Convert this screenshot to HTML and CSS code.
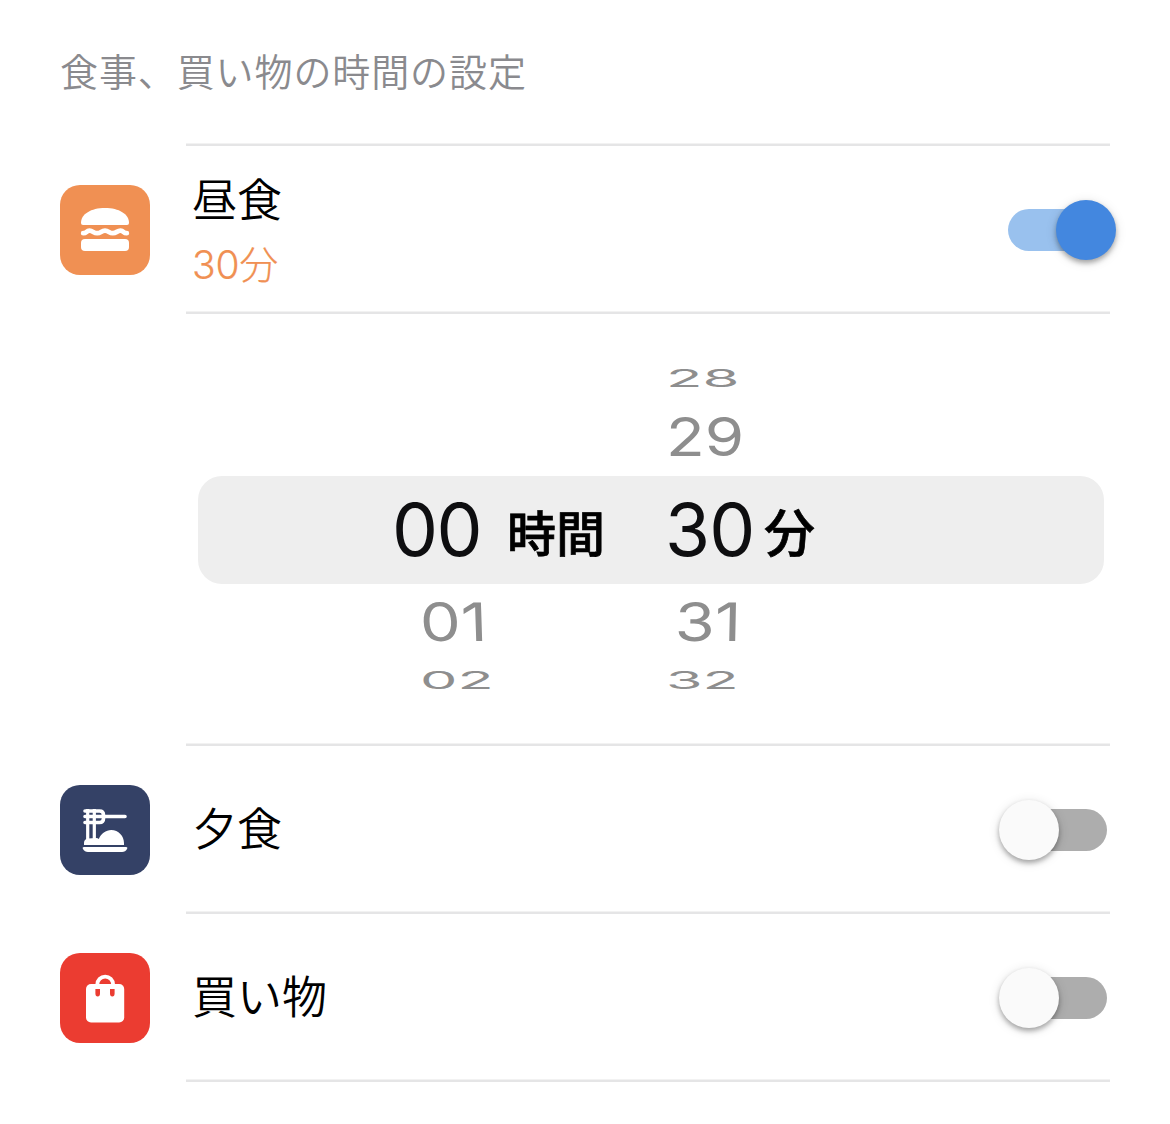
FILE: index.html
```html
<!DOCTYPE html>
<html lang="ja">
<head>
<meta charset="utf-8">
<title>食事、買い物の時間の設定</title>
<link rel="stylesheet" href="styles.css">
</head>
<body>
<main class="settings">
  <h1 class="heading">食事、買い物の時間の設定</h1>

  <section class="row">
    <div class="tile tile-lunch">
      <svg viewBox="0 0 90 90" width="90" height="90" fill="#fff">
        <path d="M23 40Q21 40 21 38C21 29 31 23 45 23S69 29 69 38Q69 40 67 40Z"/>
        <path d="M23.200 48.200C27 48.200 26 45.700 29.500 45.700S33.500 48.200 37.200 48.200S41.200 45.700 45 45.700S49 48.200 52.800 48.200S57 45.700 60.500 45.700S63 48.200 66.800 48.200" fill="none" stroke="#fff" stroke-width="4.800" stroke-linecap="round"/>
        <rect x="21" y="54" width="48" height="12" rx="4"/>
      </svg>
    </div>
    <div class="body body-first">
      <div class="labels"><span class="name">昼食</span><span class="duration">30分</span></div>
      <div class="switch on"><span class="knob"></span></div>
    </div>
  </section>

  <section class="picker">
    <div class="line far"><span class="hour"></span><span class="minute"><b>28</b></span></div>
    <div class="line near above"><span class="hour"></span><span class="minute"><b>29</b></span></div>
    <div class="line selected">
      <span class="hour"><b>00</b></span><span class="unit">時間</span>
      <span class="minute"><b>30</b></span><span class="unit unit-minute">分</span>
    </div>
    <div class="line near"><span class="hour"><b class="lean-left">01</b></span><span class="minute indent"><b class="lean-right">31</b></span></div>
    <div class="line far below"><span class="hour"><b>02</b></span><span class="minute"><b>32</b></span></div>
  </section>

  <section class="row">
    <div class="tile tile-dinner">
      <svg viewBox="0 0 90 90" width="90" height="90" fill="none" stroke="#fff" stroke-linecap="round">
        <path d="M25 26H39.500Q43.500 26 43.500 30V33.500Q43.500 37.500 39.500 37.500H25M25 31.500H65" stroke-width="3.600"/>
        <path d="M27.700 24V55M34.300 24V55" stroke-width="3.200" stroke-linecap="butt"/>
        <path d="M24 60V58Q24 54 28 53.500L36 53Q38 53 38.800 54C41 48.500 46 45 51.200 45C58.500 45 64 51 64 58V60Z" fill="#fff" stroke="none"/>
        <path d="M24 62H66Q68 62 67 64Q65.500 67 62 67H28Q24.500 67 23 64Q22 62 24 62Z" fill="#fff" stroke="none"/>
      </svg>
    </div>
    <div class="body">
      <span class="name">夕食</span>
      <div class="switch"><span class="knob"></span></div>
    </div>
  </section>

  <section class="row last">
    <div class="tile tile-shopping">
      <svg viewBox="0 0 90 90" width="90" height="90">
        <rect x="26" y="31" width="38.200" height="38.500" rx="5" fill="#fff"/>
        <path d="M37.300 33V31.500A7.900 7.900 0 0 1 53.100 31.500V33" fill="none" stroke="#fff" stroke-width="3.800"/>
        <path d="M35.400 36H40V40.500A2.300 2.900 0 0 1 35.400 40.500ZM50 36H54.600V40.500A2.300 2.900 0 0 1 50 40.500Z" fill="#eb3c31"/>
      </svg>
    </div>
    <div class="body">
      <span class="name">買い物</span>
      <div class="switch"><span class="knob"></span></div>
    </div>
  </section>
</main>
</body>
</html>
```
FILE: styles.css
```css
* { box-sizing: border-box; }
body {
  margin: 0;
  background: #fff;
  color: #000;
  font-family: "Inter", "Noto Sans CJK JP", sans-serif;
}
.settings { width: 1170px; height: 1124px; }
.heading {
  margin: 0;
  height: 143px;
  padding: 41px 0 0 60px;
  font: 350 38px/58px "Noto Sans CJK JP", sans-serif;
  letter-spacing: 0.9px;
  color: #8a8a8e;
}
.row { display: flex; height: 168px; padding: 0 60px; }
.tile { width: 90px; height: 90px; margin: 42px 36px 0 0; border-radius: 20px; }
.tile svg { display: block; }
.tile-lunch { background: #f09053; }
.tile-dinner { background: #344166; }
.tile-shopping { background: #eb3c31; }

/* Hairline separators: a faint first pixel over a 2px line */
.body, .picker {
  border-top: 1px solid #f2f2f2;
  box-shadow: inset 0 2px #e5e5e6;
}
.body {
  flex: 1;
  display: flex;
  justify-content: space-between;
  height: 168px;
  padding: 50px 3px 0 6px;
}
.body-first { padding-top: 21px; }
.body-first .switch { margin-top: 44px; }
.last { height: 171px; }
.last .body {
  height: 171px;
  box-shadow: inset 0 2px #e5e5e6, inset 0 -2px #e5e5e6, inset 0 -3px #f2f2f2;
}
.labels { display: flex; flex-direction: column; }
.name { font: 350 45px/66px "Noto Sans CJK JP", sans-serif; }
.duration {
  font: 300 39px/68px "Inter", "Noto Sans CJK JP", sans-serif;
  letter-spacing: -0.2px;
  color: #f09053;
  -webkit-text-stroke: 0.2px;
}
.switch {
  width: 99px;
  height: 42px;
  margin-top: 15px;
  border-radius: 21px;
  background: #adadad;
}
.knob {
  display: block;
  width: 60px;
  height: 60px;
  border-radius: 50%;
  background: #fafafa;
  transform: translate(-9px, -9px);
  box-shadow: 0 3px 5px rgba(0, 0, 0, .3), 0 2px 12px rgba(0, 0, 0, .12);
}
.on { background: #99c1ee; }
.on .knob { background: #4387df; transform: translate(48px, -9px); }

.picker {
  height: 432px;
  margin: 0 60px 0 186px;
  padding: 37px 6px 0 12px;
}
.line {
  display: grid;
  grid-template-columns: 222px 246px auto;
  align-items: center;
  height: 60px;
  color: #8e8e8e;
}
.line b {
  display: inline-block;
  font-weight: 380;
  font-size: 60px;
  line-height: 60px;
  transform-origin: left center;
}
.hour, .minute { white-space: nowrap; }
.line .hour { grid-column: 2; }
.line .minute { grid-column: 3; }
.far b { font-size: 57px; transform: scale(1.05, .42); }
.below b { transform: translateY(1px) scale(1.04, .42); }
.near { height: 57px; }
.above b { transform: translateY(-2px) scale(1.06, .88); }
.near .lean-left { transform: translateY(-1px) scale(1.08, .88) skewX(1.500deg); }
.near .lean-right { transform: translateY(-1px) scale(1.08, .88) skewX(-1deg); }
.indent { padding-left: 9px; }
.selected {
  grid-template-columns: 194px 115px 158px 99px auto;
  height: 108px;
  margin: 10px 0 9px;
  border-radius: 24px;
  background: #eee;
  color: #0e0e10;
}
.selected b { font-size: 73px; line-height: 108px; letter-spacing: -1.5px; }
.selected .minute { grid-column: 4; }
.selected .minute b { letter-spacing: -0.8px; }
.unit {
  margin-top: 2px;
  font: 500 49px/70px "Noto Sans CJK JP", sans-serif;
  color: #000;
  -webkit-text-stroke: 0.7px;
}
.unit-minute { margin-top: 0; font-size: 51px; }
```
